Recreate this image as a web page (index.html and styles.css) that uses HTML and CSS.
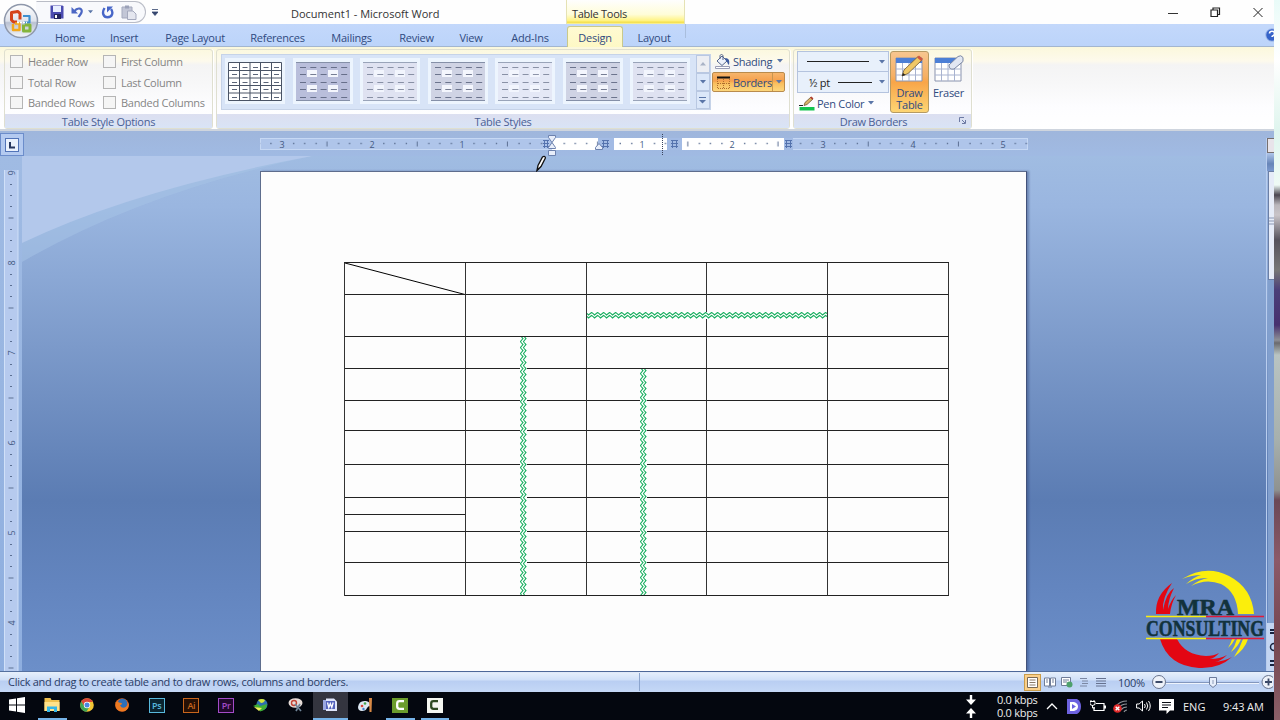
FILE: index.html
```
<!DOCTYPE html>
<html lang="en">
<head>
    <meta charset="UTF-8">
    <title>Document1 - Microsoft Word</title>
    <link rel="stylesheet" href="styles.css">
</head>
<body>
    <svg class="defs" width="0" height="0">
        <defs>
            <symbol id="thumb" viewBox="0 0 54 39">
                <rect width="54" height="39" fill="currentColor"/>
                <path d="M11 8h10v7H11zM32 8h10v7H32zM11 23h10v7H11zM32 23h10v7H32z" fill="#f4f6fd"/>
                <path d="M0 .5h54M0 38.5h54" stroke="#8590a8"/>
                <path d="M4 5.500h48M4 12.500h48M4 20.500h48M4 27.500h48M4 35.500h48" stroke="#4c5570" stroke-dasharray="6 4.300" opacity=".75"/>
            </symbol>
            <symbol id="down" viewBox="0 0 6 4"><path d="M0 0h6L3 3.500z" fill="#5b76a8"/></symbol>
            <pattern id="ticks" x="22" width="90.200" height="12" patternUnits="userSpaceOnUse">
                <path d="M11 5.500h1.300M22 5.500h1.300M33.500 5.500h1.300M56 5.500h1.300M67 5.500h1.300M78.500 5.500h1.300" stroke="#5b6f92" stroke-width="1.500"/>
                <path d="M45 3.500v5" stroke="#5b6f92"/>
            </pattern>
            <pattern id="vticks" y="3" width="14" height="90" patternUnits="userSpaceOnUse">
                <path d="M6 11.500h2M6 22.500h2M6 33.500h2M6 56.500h2M6 67.500h2M6 78.500h2M4.500 45h5" stroke="#5b6f92"/>
            </pattern>
            <pattern id="wave" width="6" height="7" patternUnits="userSpaceOnUse">
                <rect width="6" height="7" fill="#fff"/>
                <path d="M0 1.500L1.500 3 4.500 .5 6 1.500M0 4.500L1.500 6 4.500 3.500 6 4.500" fill="none" stroke="#14ad5c" stroke-width="1.100"/>
            </pattern>
            <pattern id="vwave" width="7" height="6" patternUnits="userSpaceOnUse">
                <rect width="7" height="6" fill="#fff"/>
                <path d="M1.500 0L3 1.500 .5 4.500 1.500 6M4.500 0L6 1.500 3.500 4.500 4.500 6" fill="none" stroke="#14ad5c" stroke-width="1.100"/>
            </pattern>
            <linearGradient id="orbFill" x2="0" y2="1">
                <stop offset="0" stop-color="#fff"/><stop offset=".5" stop-color="#dfe3ec"/><stop offset=".55" stop-color="#b9c1d2"/><stop offset="1" stop-color="#f4f7fc"/>
            </linearGradient>
        </defs>
    </svg>

    <div class="screen">
        <div class="window">
            <svg class="orb" width="36" height="36" viewBox="0 0 36 36">
                <circle cx="18" cy="18" r="16.500" fill="url(#orbFill)" stroke="#8f98ab" stroke-width="1.500"/>
                <g fill="none" stroke-width="3" stroke-linejoin="round">
                    <path d="M17 16.500V10.500l-2-2-6.500 1v7.500l2 2H14" stroke="#d5421a"/>
                    <path d="M20 13h6.500v6.500H21" stroke="#3d8fd0" stroke-width="2.200"/>
                    <path d="M10 21v6h6.500v-6.500H12" stroke="#f2a81d" stroke-width="2.400"/>
                    <path d="M20.500 21.500v6.500h6.500V22h-5" stroke="#84b53c"/>
                </g>
                <path d="M14 19.500h10" stroke="#fff" stroke-width="1.500" stroke-dasharray="2 1"/>
            </svg>

            <div class="titlebar">
                <div class="quick-access">
                    <svg width="14" height="14" viewBox="0 0 14 14"><path d="M.5.5h12l1 1v12H.5z" fill="#4a4bb0"/><path d="M3 1h8v6H3z" fill="#e9efff"/><path d="M4 9h7v5H4z" fill="#23265f"/><path d="M5 10h2v3H5z" fill="#fff"/></svg>
                    <svg class="undo" width="13" height="12" viewBox="0 0 13 12"><path d="M3 5.500C7 .5 12 2.500 10.500 6.500 9.800 8.500 8 10 7.500 11" fill="none" stroke="#4c67c4" stroke-width="2.200"/><path d="M.5 1v6.500H7z" fill="#4c67c4"/></svg>
                    <svg class="undo-arrow" width="5" height="4"><use href="#down"/></svg>
                    <svg class="redo" width="13" height="13" viewBox="0 0 13 13"><path d="M3.500 2C.5 7 2.500 11.300 6.500 11.300c5 0 6-5 3.500-8.300" fill="none" stroke="#4766c8" stroke-width="2.400"/><path d="M6 .5h6L6 6.500z" fill="#4766c8"/></svg>
                    <svg class="paste" width="16" height="15" viewBox="0 0 16 15"><path d="M1 2h10v11H1z" fill="#c2c6d6" stroke="#a4a9bd"/><path d="M4 .5h4v3H4z" fill="#9ba1b8"/><path d="M6.500 6H12l3 3v5.500H6.500z" fill="#e4e6ef" stroke="#a4a9bd"/></svg>
                </div>
                <svg class="customize" width="6" height="7" viewBox="0 0 6 7"><path d="M0 .5h6M0 3l3 3.500L6 3z" fill="#35466f" stroke="#35466f" stroke-width=".8"/></svg>
                <div class="title">Document1 - Microsoft Word</div>
                <div class="context-title">Table Tools</div>
                <div class="window-buttons">
                    <svg width="10" height="11" viewBox="0 0 10 11"><path d="M0 6.500h10" stroke="#333"/></svg>
                    <svg width="11" height="11" viewBox="0 0 11 11"><path d="M1 3h6.500v6.500H1zM3 3V1h6.500v6.500h-2" fill="none" stroke="#222" stroke-width="1.200"/></svg>
                    <svg width="10" height="11" viewBox="0 0 10 11"><path d="M.5 1l9 9M9.500 1l-9 9" stroke="#222"/></svg>
                </div>
            </div>

            <div class="tabs">
                <div class="tab home">Home</div>
                <div class="tab insert">Insert</div>
                <div class="tab page-layout">Page Layout</div>
                <div class="tab references">References</div>
                <div class="tab mailings">Mailings</div>
                <div class="tab review">Review</div>
                <div class="tab view">View</div>
                <div class="tab add-ins">Add-Ins</div>
                <div class="tab design active">Design</div>
                <div class="tab layout">Layout</div>
                <svg class="help" width="9" height="14" viewBox="0 0 9 14"><circle cx="7" cy="7" r="6.300" fill="#3563c9" stroke="#a9c0ec"/><path d="M4.500 5.500c0-3 5-3 5 0S7 7 7 9" fill="none" stroke="#fff" stroke-width="1.600"/></svg>
            </div>

            <div class="ribbon">
                <div class="group style-options">
                    <div class="group-body checks">
                        <label><i></i>Header Row</label><label><i></i>First Column</label>
                        <label><i></i>Total Row</label><label><i></i>Last Column</label>
                        <label><i></i>Banded Rows</label><label><i></i>Banded Columns</label>
                    </div>
                    <div class="group-name">Table Style Options</div>
                </div>

                <div class="group table-styles">
                    <div class="group-body">
                        <div class="gallery">
                            <div class="thumb"><svg width="54" height="39" viewBox="0 0 54 39"><path d="M.5.5h53v38H.5zM0 8.500h54M0 16h54M0 23.500h54M0 31h54M11.500 0v39M22 0v39M32.500 0v39M43.500 0v39" fill="#fff" stroke="#4a5466"/><path d="M4 5.500h48M4 12.500h48M4 20.500h48M4 27.500h48M4 35.500h48" stroke="#5a6478" stroke-dasharray="5 5.500"/></svg></div>
                            <div class="thumb t-dark"><svg width="54" height="39"><use href="#thumb"/></svg></div>
                            <div class="thumb t-light"><svg width="54" height="39"><use href="#thumb"/></svg></div>
                            <div class="thumb t-mid"><svg width="54" height="39"><use href="#thumb"/></svg></div>
                            <div class="thumb t-pale"><svg width="54" height="39"><use href="#thumb"/></svg></div>
                            <div class="thumb t-mid"><svg width="54" height="39"><use href="#thumb"/></svg></div>
                            <div class="thumb t-light"><svg width="54" height="39"><use href="#thumb"/></svg></div>
                            <div class="gallery-scroll">
                                <div class="disabled"><svg width="6" height="4" viewBox="0 0 6 4"><path d="M0 3.500h6L3 0z" fill="#a9b3c6"/></svg></div>
                                <div><svg width="6" height="4"><use href="#down"/></svg></div>
                                <div><svg width="7" height="7" viewBox="0 0 7 7"><path d="M0 .5h7" stroke="#5b76a8"/><path d="M0 3h7L3.500 6.500z" fill="#5b76a8"/></svg></div>
                            </div>
                        </div>
                        <div class="style-buttons">
                            <div class="shading">
                                <svg width="16" height="15" viewBox="0 0 16 15"><path d="M2 7l5-5 5 5-5 4.500z" fill="#eef2fb" stroke="#54658c"/><path d="M5 5V2c0-2 3-2 3 0v4" fill="none" stroke="#54658c"/><path d="M10 4c5 0 4.500 4 4 7-2-1-1-3-3-4z" fill="#3d5ba0"/><path d="M.5 12.500h14v2H.5z" fill="#fff" stroke="#9a9db5"/></svg>
                                <span>Shading</span><svg width="6" height="4"><use href="#down"/></svg>
                            </div>
                            <div class="borders">
                                <svg width="13" height="13" viewBox="0 0 13 13"><path d="M.5 3v9.500h12V3M6.500 3v9M1 7.500h11" fill="none" stroke="#b06d2d" stroke-dasharray="1 1"/><path d="M0 1.500h13" stroke="#111" stroke-width="2"/></svg>
                                <span>Borders</span><b><svg width="6" height="4"><use href="#down"/></svg></b>
                            </div>
                        </div>
                    </div>
                    <div class="group-name">Table Styles</div>
                </div>

                <div class="group draw-borders">
                    <div class="group-body">
                        <div class="pen">
                            <div class="combo"><hr class="long"><svg width="6" height="4"><use href="#down"/></svg></div>
                            <div class="combo"><span>½ pt</span><hr class="short"><svg width="6" height="4"><use href="#down"/></svg></div>
                            <div class="pen-color">
                                <svg width="16" height="15" viewBox="0 0 16 15"><path d="M.5 11h15v3.500H.5z" fill="#14c44e"/><path d="M0 9.500h4" stroke="#222"/><path d="M5 9.500l1-3 6-5.500 2 2-6 5.500z" fill="#d9b56a" stroke="#6f5632" stroke-width=".8"/><path d="M11 1.500L12.500.5l2 2-1.500 1z" fill="#b23c2e"/></svg>
                                <span>Pen Color</span><svg width="6" height="4"><use href="#down"/></svg>
                            </div>
                        </div>
                        <div class="big-button pressed">
                            <svg width="30" height="29" viewBox="0 0 30 29"><path d="M1 3h26v23H1z" fill="#fff" stroke="#8a93ad"/><path d="M1 3h26v5H1z" fill="#4c7fd6"/><path d="M1 14h26M1 20h26M7.500 8v18M14 8v18M20.500 8v18" stroke="#a8b3d0"/><path d="M7 21l2-6L23 1.500l4 3.500-14 13.500z" fill="#f0c867" stroke="#7c643c" stroke-width=".9"/><path d="M7 21l1-3 2.500 2z" fill="#222"/><path d="M22 2.500l2-2 4 3.500-2 2z" fill="#d0563f"/></svg>
                            Draw<br>Table
                        </div>
                        <div class="big-button">
                            <svg width="30" height="29" viewBox="0 0 30 29"><path d="M1 3h26v23H1z" fill="#fff" stroke="#8a93ad"/><path d="M1 3h26v5H1z" fill="#4c7fd6"/><path d="M1 14h26M1 20h26M7.500 8v18M14 8v18M20.500 8v18" stroke="#a8b3d0"/><path d="M15 10L24 1.500q3-2 5 1v4L20 14q-5 1-5-4z" fill="#e2e7f2" stroke="#7b87a3"/></svg>
                            Eraser
                        </div>
                    </div>
                    <div class="group-name">Draw Borders
                        <svg class="launcher" width="7" height="7" viewBox="0 0 7 7"><path d="M.5 5V.5H5M3 3l3 3M6.500 3v3.500H3" fill="none" stroke="#6d7aa3"/></svg>
                    </div>
                </div>
            </div>

            <div class="ruler-row">
                <div class="tab-stop"><svg width="14" height="14" viewBox="0 0 14 14"><rect x=".5" y=".5" width="13" height="13" fill="#eaf1fd" stroke="#5274b8"/><path d="M5 4v5.500h5" fill="none" stroke="#26375f" stroke-width="2"/></svg></div>
                <svg class="ruler" width="768" height="25" viewBox="0 0 768 25">
                    <rect x=".5" y="7.500" width="767" height="11" fill="#afc5ea" stroke="#c6d8f4"/>
                    <path d="M292 7h46v12h-46zM354 7h53v12h-53zM422 7h102v12H422z" fill="#fff"/>
                    <g transform="translate(0 7)"><rect width="768" height="12" fill="url(#ticks)"/></g>
                    <g class="ruler-num">
                        <text x="22" y="16.500">3</text><text x="112" y="16.500">2</text><text x="202" y="16.500">1</text>
                        <text x="382" y="16.500">1</text><text x="472" y="16.500">2</text><text x="563" y="16.500">3</text><text x="653" y="16.500">4</text><text x="743" y="16.500">5</text>
                    </g>
                    <path d="M338 7h16v12h-16zM407 7h15v12h-15zM524 7h9v12h-9z" fill="#a3bbe4"/>
                    <path d="M283 9.500h6M283 12.500h6M283 15.500h6M284.500 9v8M287.500 9v8M342 9.500h7M342 12.500h7M342 15.500h7M343.500 9v8M347.500 9v8M411 9.500h7M411 12.500h7M411 15.500h7M412.500 9v8M416.500 9v8M525 9.500h7M525 12.500h7M525 15.500h7M526.500 9v8M530.500 9v8" stroke="#5573ae"/>
                    <path d="M288.500 4.500h7v2l-3.500 5 3.500 5v1h-7v-1l3.500-5-3.500-5zM288.500 19.500h7v5h-7zM335.500 18.500v-2l3.500-4 3.500 4v2z" fill="#e8eefa" stroke="#6d82ae"/>
                    <path d="M402.500 3v22" stroke="#39435c" stroke-dasharray="1 1"/>
                </svg>
            </div>

            <div class="workspace">
                <svg class="v-ruler" width="22" height="515" viewBox="0 0 22 515">
                    <rect x="4" y="14" width="14" height="501" fill="#b6caee"/>
                    <path d="M4.500 14v501M18 14v501" stroke="#d0e0f8"/>
                    <g transform="translate(4 14)"><rect width="14" height="501" fill="url(#vticks)"/></g>
                    <g class="ruler-num">
                        <text transform="translate(15 17) rotate(-90)">9</text>
                        <text transform="translate(15 107) rotate(-90)">8</text>
                        <text transform="translate(15 197) rotate(-90)">7</text>
                        <text transform="translate(15 287) rotate(-90)">6</text>
                        <text transform="translate(15 377) rotate(-90)">5</text>
                        <text transform="translate(15 467) rotate(-90)">4</text>
                    </g>
                </svg>
                <div class="desk">
                    <svg class="swoosh" width="292" height="110" viewBox="0 0 292 110">
                        <path d="M0 0h290Q120 36 0 106z" fill="#a6c3e6" opacity=".55"/>
                        <path d="M0 0h290Q110 34 0 87z" fill="#b3c8eb"/>
                    </svg>
                    <div class="page">
                        <table>
                            <tr><td class="diagonal"><svg width="120" height="31" viewBox="0 0 120 31"><path d="M0 0l120 31.500" stroke="#000"/></svg></td><td></td><td></td><td></td><td></td></tr>
                            <tr><td></td><td></td><td></td><td></td><td></td></tr>
                            <tr><td></td><td></td><td></td><td></td><td></td></tr>
                            <tr><td></td><td></td><td></td><td></td><td></td></tr>
                            <tr><td></td><td></td><td></td><td></td><td></td></tr>
                            <tr><td></td><td></td><td></td><td></td><td></td></tr>
                            <tr><td></td><td></td><td></td><td></td><td></td></tr>
                            <tr><td class="split"><div></div></td><td></td><td></td><td></td><td></td></tr>
                            <tr><td></td><td></td><td></td><td></td><td></td></tr>
                            <tr><td></td><td></td><td></td><td></td><td></td></tr>
                        </table>
                        <svg class="wave-lines" width="605" height="334" viewBox="0 0 605 334">
                            <g transform="translate(243 50)"><rect width="240" height="7" fill="url(#wave)"/></g>
                            <g transform="translate(176 75)"><rect width="7" height="258" fill="url(#vwave)"/></g>
                            <g transform="translate(296 107)"><rect width="7" height="226" fill="url(#vwave)"/></g>
                        </svg>
                    </div>
                    <svg class="pencil" width="10" height="17" viewBox="0 0 10 17"><path d="M1 15.500l1-5L6.500 2q2-1.500 3 .8L5 11.500z" fill="#fff" stroke="#111" stroke-width="1.300"/><path d="M.5 16.500l1-4 2 1z" fill="#111"/></svg>
                    <svg class="logo" width="122" height="102" viewBox="0 0 122 102">
                        <path d="M37 11Q61-4 84 8q23 12 25 38H93Q92 24 76 16 61 10 46 18q9-7 17-8Q52 9 41 16q8-7 15-9-9 0-19 4z" fill="#fbee0c"/>
                        <path d="M11 46Q10 27 27 15 17 30 18 42 21 25 29 20q-6 12-6 21 3-9 8-14-5 9-6 19z" fill="#e30613"/>
                        <path d="M15 71h17q8 16 29 17 8 0 13-3-4 5-9 6 10 0 17-4-6 6-12 7 10-1 17-5-13 12-33 11Q23 98 15 71z" fill="#e30613"/>
                        <path d="M103 71q-3 10-14 18 6-9 9-18zM96 71q-3 8-10 13 4-6 6-13zM90 71q-3 6-7 9 3-5 4-9z" fill="#fbee0c"/>
                        <path d="M1 48.500h60M1 70.500h60" stroke="#fbee0c" stroke-width="1.400"/>
                        <path d="M61 48.500h58M61 70.500h58" stroke="#e01b3c" stroke-width="1.400"/>
                        <text class="mra" x="32" y="46.500" textLength="57" lengthAdjust="spacingAndGlyphs">MRA</text>
                        <text x="1" y="67.500" textLength="118" lengthAdjust="spacingAndGlyphs">CONSULTING</text>
                    </svg>
                </div>
                <div class="scrollbar">
                    <div class="ruler-toggle"></div>
                    <div class="scroll-up"></div>
                    <div class="scroll-thumb"></div>
                    <div class="scroll-track"></div>
                    <svg width="8" height="48" viewBox="0 0 8 48"><path d="M3 7h5M3 10h5M3 38h5M3 42h5" stroke="#17233f" stroke-width="2"/><circle cx="7" cy="24" r="3.500" fill="none" stroke="#17233f" stroke-width="1.500"/></svg>
                </div>
            </div>

            <div class="statusbar">
                <div class="message">Click and drag to create table and to draw rows, columns and borders.</div>
                <div class="view-buttons">
                    <div class="selected"><svg width="11" height="11" viewBox="0 0 11 11"><path d="M.5.5h10v10H.5z" fill="#fff" stroke="#7a6a55"/><path d="M2.500 3h6M2.500 5.500h6M2.500 8h6" stroke="#8a7a68"/></svg></div>
                    <div><svg width="12" height="11" viewBox="0 0 12 11"><path d="M.5 1h5v8h-5zM6.500 1h5v8h-5z" fill="#fff" stroke="#6f7c98"/><path d="M2 3h2M2 5h2M8 3h2M8 5h2M4 10h4" stroke="#6f7c98"/></svg></div>
                    <div><svg width="12" height="11" viewBox="0 0 12 11"><path d="M.5.5h9v8h-9z" fill="#fff" stroke="#6f7c98"/><path d="M2 3h6M2 5h4" stroke="#6f7c98"/><circle cx="8.500" cy="7.500" r="3" fill="#4da06c"/></svg></div>
                    <div><svg width="10" height="10" viewBox="0 0 10 10"><path d="M1 1.500h7M3 4h6M3 6.500h6M1 9h7" stroke="#7c88a3"/></svg></div>
                    <div><svg width="10" height="10" viewBox="0 0 10 10"><path d="M0 1.500h10M0 4h10M0 6.500h10M0 9h10" stroke="#66728f" stroke-width="1.200"/></svg></div>
                </div>
                <div class="zoom">100%</div>
                <svg class="slider" width="122" height="18" viewBox="0 0 122 18">
                    <path d="M15 9.500h93" stroke="#8397bd"/><path d="M15 10.500h93" stroke="#eef4fd"/>
                    <path d="M58.500 4.500h7v7L62 14.500l-3.500-3z" fill="#e8effb" stroke="#6d7c9c"/><path d="M62 7v4" stroke="#8d9cba"/>
                    <g fill="#eef2f9" stroke="#69748d"><circle cx="8" cy="9" r="6.500"/><circle cx="117.500" cy="9" r="6.500"/></g>
                    <path d="M4.500 9h7M114 9h7M117.500 5.500v7" stroke="#3c4a68" stroke-width="1.800"/>
                </svg>
            </div>

            <div class="taskbar">
                <div class="task"><svg width="16" height="16" viewBox="0 0 16 16"><path d="M0 2.500l7-1v6H0zM8 1.300L16 0v7.500H8zM0 8.500h7v6l-7-1zM8 8.500h8V16l-8-1.200z" fill="#fff"/></svg></div>
                <div class="task open"><svg width="16" height="14" viewBox="0 0 16 14"><path d="M.5 0h6l1 2h8v11H.5z" fill="#f0c14e"/><path d="M.5 4h15v9H.5z" fill="#ffe28a"/><path d="M3 14V8.500h10V14h-3v-3H6v3z" fill="#35b6e8"/></svg></div>
                <div class="task"><svg width="14" height="14" viewBox="0 0 14 14"><circle cx="7" cy="7" r="6.800" fill="#f4c534"/><path d="M1.200 3.500A6.800 6.800 0 0 1 13 4H7L4.500 9z" fill="#d9463a"/><path d="M1.200 3.500A6.800 6.800 0 0 0 6.500 13.800L9 9.500 4.500 8.500z" fill="#3fa456"/><circle cx="7" cy="7" r="3.200" fill="#fff"/><circle cx="7" cy="7" r="2.500" fill="#4a86e0"/></svg></div>
                <div class="task"><svg width="14" height="14" viewBox="0 0 14 14"><circle cx="7" cy="7" r="6.800" fill="#e8641c"/><circle cx="7.500" cy="5.500" r="4.800" fill="#2d6fb8"/><path d="M.5 4q2-1 3.500.5 3 0 3 1.500L5 7.500Q7 11 11 9q2.500-2 2.500-5Q15 10 10 13 2 14.500.5 8z" fill="#ed7a22"/></svg></div>
                <div class="task"><div class="adobe ps">Ps</div></div>
                <div class="task"><div class="adobe ai">Ai</div></div>
                <div class="task"><div class="adobe pr">Pr</div></div>
                <div class="task"><svg width="15" height="13" viewBox="0 0 15 13"><circle cx="9" cy="5.500" r="5.500" fill="#2f6fae"/><path d="M5 1q4-2 7 0-1 3-4 3z" fill="#d5e83b"/><path d="M0 7l5-2 2 2 7-2q0 6-7 7.500l-1-3z" fill="#3fae35"/><path d="M1 8l8 1-3 3z" fill="#eef25a"/></svg></div>
                <div class="task"><svg width="15" height="14" viewBox="0 0 15 14"><ellipse cx="7.500" cy="5" rx="7" ry="4.800" fill="#e7dcd8"/><circle cx="6" cy="5" r="2.500" fill="none" stroke="#c44435" stroke-width="1.400"/><path d="M7 6l6 7M12 6l-4 7" stroke="#71869a" stroke-width="1.700"/></svg></div>
                <div class="task current"><svg width="15" height="14" viewBox="0 0 15 14"><path d="M3 .5h8l3 3V13H3z" fill="#dfe6fa"/><path d="M0 2h3v10H0z" fill="#9ba8e0"/><path d="M3 3h9v8H3z" fill="#5463bd"/><path d="M4.500 4.500l1.300 5 1.500-4 1.500 4 1.400-5" fill="none" stroke="#fff" stroke-width="1.300"/></svg></div>
                <div class="task"><svg width="15" height="14" viewBox="0 0 15 14"><path d="M0 9q1-7 8-6 5 1 4 5-2 0-3 2-1 3-5 3-4 0-4-4z" fill="#dce7f2"/><circle cx="4" cy="8" r="1.300" fill="#d8443b"/><circle cx="7" cy="5.500" r="1.300" fill="#47a34b"/><circle cx="5.500" cy="11" r="1.200" fill="#3b7cd0"/><path d="M11 0h3l-.5 14h-2z" fill="#d98945"/></svg></div>
                <div class="task open"><div class="camtasia green"><svg width="9" height="10" viewBox="0 0 9 10"><path d="M8 1.200H3.500Q1.200 1.200 1.200 3.500v3Q1.200 8.800 3.500 8.800H8" fill="none" stroke="#fff" stroke-width="2.300"/></svg></div></div>
                <div class="task open"><div class="camtasia"><svg width="9" height="10" viewBox="0 0 9 10"><path d="M8 1.200H3.500Q1.200 1.200 1.200 3.500v3Q1.200 8.800 3.500 8.800H8" fill="none" stroke="#2e4a22" stroke-width="2.300"/></svg></div></div>

                <div class="tray">
                    <svg class="net-arrows" width="10" height="23" viewBox="0 0 10 23"><path d="M3.800 0h2.400v4.500H10L5 10 0 4.500h3.800zM5 13l5 5.500H6.200V23H3.800v-4.500H0z" fill="#fff"/></svg>
                    <div class="speed"><span>0.0 kbps</span><span>0.0 kbps</span></div>
                    <svg class="chevron" width="12" height="7" viewBox="0 0 12 7"><path d="M1 6l5-5 5 5" fill="none" stroke="#fff" stroke-width="1.300"/></svg>
                    <svg class="potplayer" width="14" height="15" viewBox="0 0 14 15"><path d="M0 0h10q4 2 4 7.500T10 15H0z" fill="#6d62e0"/><path d="M3 3h4q4 1 4 4.500T7 12H3z" fill="#fff"/><path d="M5 5v5l4-2.500z" fill="#6d62e0"/></svg>
                    <svg class="battery" width="16" height="12" viewBox="0 0 16 12"><path d="M6 3.500h8v7H4V7" fill="none" stroke="#fff" stroke-width="1.200"/><path d="M14 5.500h2v3h-2z" fill="#fff"/><path d="M0 1.500h5v3q-2.500 2-5 0zM2.500 5v3H5M1 0v2M4 0v2" fill="none" stroke="#fff"/></svg>
                    <svg class="wifi" width="15" height="13" viewBox="0 0 15 13"><path d="M3 6Q7 1 14 1M6 8q2-4 8-4M8 10q2-3 6-3M11 12q1-2 3-2" fill="none" stroke="#8d9096" stroke-width="1.200"/><circle cx="4.500" cy="8.500" r="4.300" fill="#e02828"/><path d="M2.700 6.700l3.600 3.600M6.300 6.700l-3.600 3.600" stroke="#fff" stroke-width="1.400"/></svg>
                    <svg class="speaker" width="15" height="12" viewBox="0 0 15 12"><path d="M.6 4h2.500L6.500 1v10L3.100 8H.6zM8.500 4q1.500 2 0 4M10.500 2.500q2.500 3.500 0 7M12.500 1q3.500 5 0 10" fill="none" stroke="#fff"/></svg>
                    <svg class="notify" width="15" height="15" viewBox="0 0 15 15"><path d="M0 0h15v11.500h-4L7.500 15v-3.500H0z" fill="#fff"/><path d="M3 3.500h9M3 6h9M3 8.500h6" stroke="#0a0d14"/></svg>
                    <div class="lang">ENG</div>
                    <div class="clock">9:43 AM</div>
                </div>
            </div>
        </div>
        <div class="wallpaper"></div>
    </div>
</body>
</html>
```
FILE: styles.css
```
* {
    box-sizing: border-box;
}

body {
    margin: 0;
    font-family: "Open Sans", "Noto Sans", sans-serif;
    font-size: 11px;
    letter-spacing: -0.28px;
    color: #304a80;
    overflow: hidden;
}

svg {
    display: block;
    flex: none;
}

.defs {
    position: absolute;
}

.screen {
    display: flex;
    width: 1280px;
    height: 720px;
}

.window {
    position: relative;
    display: flex;
    flex-direction: column;
    width: 1274px;
    height: 720px;
    overflow: hidden;
}

.wallpaper {
    width: 6px;
    background: linear-gradient(#e9fbf8 0, #fff 60px, #dff5ee 130px, #eefaf5 185px, #4a4650 195px, #b9b6bb 205px, #c9c4c8 215px, #55525c 240px, #777 270px, #4b3f78 290px, #47306f 325px, #8d8f96 340px, #6b6a6e 343px, #b9c4c2 355px, #a7b0ad 440px, #8f9290 490px, #6b4856 500px, #8c5a68 560px, #754650 640px, #8a5f68 720px);
}

/* title bar */

.titlebar {
    display: flex;
    align-items: center;
    height: 24px;
    background: #fefefe;
    color: #333;
}

.orb {
    position: absolute;
    left: 3px;
    top: 3px;
    z-index: 2;
}

.quick-access {
    display: flex;
    align-items: center;
    width: 110px;
    height: 22px;
    margin-left: 36px;
    padding-left: 13px;
    border: 1px solid #b9bcc6;
    border-left-color: transparent;
    border-radius: 0 11px 11px 0;
    background: #f8f9fc;
}

.undo {
    margin-left: 7px;
}

.undo-arrow {
    margin-left: 4px;
}

.redo {
    margin-left: 8px;
}

.paste {
    margin-left: 7px;
}

.customize {
    margin-left: 6px;
}

.title {
    width: 408px;
    padding-left: 133px;
    padding-top: 2px;
    letter-spacing: 0;
    white-space: nowrap;
}

.context-title {
    width: 119px;
    height: 24px;
    padding: 6px 0 0 5px;
    border-left: 1px solid #e5e2b4;
    border-right: 1px solid #e5e2b4;
    background: linear-gradient(#fefefe 0, #fffdd8 60%, #fff27c 88%, #f2dc40 92%, #faf3a8);
}

.window-buttons {
    display: flex;
    flex: 1;
    justify-content: flex-end;
    gap: 32px;
    padding-right: 11px;
}

/* tabs */

.tabs {
    display: flex;
    height: 23px;
    padding-left: 43px;
    background: linear-gradient(#c3d8fb, #bcd4fa);
    border-bottom: 1px solid #a3b6cf;
    line-height: 27px;
    letter-spacing: -0.25px;
    text-align: center;
}

.home { width: 54px; }
.insert { width: 54px; }
.page-layout { width: 88px; }
.references { width: 77px; }
.mailings { width: 71px; }
.review { width: 59px; }
.view { width: 50px; }
.add-ins { width: 68px; }
.design { width: 56px; }

.layout {
    width: 63px;
    margin-bottom: 8px;
    border-right: 1px solid #a9bedd;
}

.tab.active {
    height: 23px;
    margin: 2px 0 0 3px;
    line-height: 22px;
    background: linear-gradient(#fffad2, #fdf8c4);
    border: 1px solid #c9c98c;
    border-bottom: none;
    border-radius: 3px 3px 0 0;
}

.help {
    margin: 4px 0 0 auto;
}

/* ribbon */

.ribbon {
    display: flex;
    gap: 3px;
    height: 84px;
    padding: 2px 0 0 4px;
    background: linear-gradient(#fbf8dc 0, #fdfaec 14px, #f4f4f4 18px, #f7f7f8 36px, #fdfdff 60px, #fff);
    border-bottom: 2px solid #cfd5de;
}

.group {
    display: flex;
    flex-direction: column;
    border: 1px solid #dfdfd0;
    border-radius: 3px;
    box-shadow: 1px 0 0 #fff;
}

.style-options { width: 209px; }
.table-styles { width: 574px; }
.draw-borders { width: 179px; }

.group-body {
    display: flex;
    height: 64px;
}

.group-name {
    position: relative;
    height: 14px;
    background: linear-gradient(#dcdff0, #d9e4f6);
    color: #4a5f95;
    line-height: 15px;
    text-align: center;
}

.checks {
    display: grid;
    grid-template-columns: 93px 1fr;
    grid-template-rows: 21px 20px 21px;
    padding: 1px 0 0 5px;
    color: #858585;
}

.checks label {
    display: flex;
    align-items: center;
    gap: 5px;
    white-space: nowrap;
}

.checks i {
    width: 13px;
    height: 13px;
    border: 1px solid #b5b5b5;
    background: #f5f5f5;
}

.gallery {
    display: flex;
    flex: none;
    align-items: center;
    width: 490px;
    height: 56px;
    margin: 4px 0 0 4px;
    padding-left: 3px;
    gap: 7.5px;
    border: 1px solid #c6d3e8;
    background: #d8e4f7;
}

.thumb {
    display: flex;
    flex: none;
    align-items: center;
    justify-content: center;
    width: 60px;
    height: 46px;
    margin-bottom: 2px;
    background: #edf5fe;
}

.t-dark { color: #b9bedb; }
.t-light { color: #dcdeef; }
.t-mid { color: #cfd3e4; }
.t-pale { color: #e2e5f5; }

.t-light svg,
.t-pale svg {
    opacity: 0.8;
}

.gallery-scroll {
    flex: none;
    width: 14px;
    margin-left: -2px;
}

.gallery-scroll div {
    display: flex;
    align-items: center;
    justify-content: center;
    height: 18px;
    border: 1px solid #b9c8e2;
    background: #dbe7f9;
}

.gallery-scroll .disabled {
    background: #eceef3;
}

.style-buttons {
    display: flex;
    flex-direction: column;
    margin: 1px 0 0 1px;
}

.shading,
.borders {
    display: flex;
    align-items: center;
    width: 73px;
    height: 20px;
}

.shading {
    padding-left: 3px;
    gap: 2px;
}

.shading span {
    width: 42px;
}

.borders {
    margin-top: 1px;
    padding-left: 4px;
    border: 1px solid #b98b4c;
    border-radius: 2px;
    background: linear-gradient(#f6b56c, #f5a04c 45%, #f9bd5c 55%, #fcd67c);
}

.borders span {
    margin-left: 3px;
    width: 38px;
}

.borders b {
    display: flex;
    align-items: center;
    height: 18px;
    margin-left: 1px;
    padding-left: 3px;
    border-left: 1px solid #c79650;
}

.pen {
    width: 92px;
    margin: 1px 0 0 3px;
}

.combo {
    display: flex;
    align-items: center;
    height: 21px;
    padding: 0 3px 0 9px;
    border: 1px solid #b4c3de;
    background: #e8f0fb;
    color: #222;
}

.combo + .combo {
    border-top: none;
    padding-left: 11px;
}

.combo span {
    flex: none;
    width: 25px;
}

.combo hr {
    margin: 0 auto 0 0;
    border: none;
    height: 1px;
    background: #222;
}

.combo .long { width: 62px; }

.combo .short {
    width: 34px;
    margin-left: 4px;
}

.pen-color {
    display: flex;
    align-items: center;
    height: 20px;
    padding-left: 2px;
    gap: 2px;
    white-space: nowrap;
}

.pen-color span {
    width: 49px;
}

.big-button {
    width: 39px;
    height: 62px;
    margin-top: 1px;
    padding-top: 3px;
    line-height: 12px;
    text-align: center;
    border: 1px solid transparent;
    border-radius: 3px;
}

.big-button svg {
    margin: 0 auto 3px;
}

.pressed {
    margin-left: 1px;
    border-color: #b69a62;
    background: linear-gradient(#f7c68f 0, #f6b064 40%, #f8a548 50%, #fdd574);
}

.launcher {
    position: absolute;
    right: 5px;
    top: 3px;
}

.draw-borders .group-name {
    padding-right: 18px;
}

/* rulers */

.ruler-row {
    display: flex;
    height: 25px;
    background: linear-gradient(#9fb6dc, #a0bae3);
}

.tab-stop {
    display: flex;
    align-items: center;
    justify-content: center;
    width: 24px;
    height: 23px;
    margin-top: 2px;
    border: 1px solid #6c8dcb;
    background: #b4caf0;
}

.ruler {
    margin-left: 236px;
}

.ruler-num {
    font-family: "Open Sans", sans-serif;
    font-size: 9px;
    fill: #455a83;
    text-anchor: middle;
}

/* document */

.workspace {
    position: relative;
    display: flex;
    height: 515px;
    background: linear-gradient(#a0bce2 0, #9ab6e0 50px, #7c9aca 190px, #5b7cb3 345px, #6385bf 430px, #6c8fc9);
}

.v-ruler {
    background: linear-gradient(#a0bbe3, #8eaedf);
}

.desk {
    position: relative;
    flex: 1;
    padding: 15px 0 0 239px;
}

.swoosh {
    position: absolute;
    left: 0;
    top: 0;
}

.page {
    position: relative;
    width: 767px;
    height: 500px;
    margin-left: -1px;
    padding: 91px 0 0 84px;
    border: 1px solid #5e6d8d;
    border-bottom: none;
    border-right: 1px solid #43527a;
    background: #fdfdfd;
    box-shadow: 2px 0 2px rgba(40, 60, 110, 0.4);
}

table {
    width: 605px;
    margin: -1px 0 0 -1px;
    table-layout: fixed;
    border-collapse: separate;
    border-spacing: 0;
    border-left: 1px solid #333;
    border-top: 1px solid #222;
}

td {
    width: 121px;
    padding: 0;
    border-right: 1px solid #333;
    border-bottom: 1px solid #222;
}

td:nth-child(3) {
    width: 120px;
}

tr { height: 32px; }
tr:nth-child(2) { height: 42px; }
tr:nth-child(5) { height: 30px; }
tr:nth-child(6) { height: 34px; }
tr:nth-child(7) { height: 33px; }
tr:nth-child(8) { height: 34px; }
tr:nth-child(9) { height: 31px; }
tr:nth-child(10) { height: 33px; }

.split div {
    height: 1px;
    background: #222;
}

.wave-lines {
    position: absolute;
    left: 83px;
    top: 90px;
}

.pencil {
    position: absolute;
    left: 514px;
    top: -1px;
}

.logo {
    position: absolute;
    left: 1123px;
    top: 412px;
    overflow: visible;
}

.logo text {
    font-family: "Liberation Serif", serif;
    font-size: 24px;
    font-weight: bold;
    letter-spacing: 0;
    fill: #12323c;
    stroke: #12323c;
    stroke-width: 0.6px;
}

.logo .mra {
    font-size: 23px;
}

.scrollbar {
    display: flex;
    flex-direction: column;
    width: 8px;
    height: 533px;
    margin-top: -18px;
    border-left: 1px solid #b9cdee;
}

.ruler-toggle {
    height: 15px;
    border: 1px solid #77706f;
    border-right: none;
    background: #e8e4ea;
}

.scroll-up {
    height: 18px;
    background: linear-gradient(#b0c6ea, #6685b8 60%, #7b99cd);
}

.scroll-thumb {
    height: 109px;
    margin-left: 1px;
    border: 1px solid #6c7fa5;
    border-right: none;
    background: linear-gradient(#e6ecf8 45px, #8c98b3 46px, #e6ecf8 47px, #e6ecf8 48px, #8c98b3 49px, #e6ecf8 50px, #e6ecf8 51px, #8c98b3 52px, #e6ecf8 53px);
}

.scroll-track {
    flex: 1;
    margin-left: 1px;
    background: #819fcd;
}

.scrollbar svg {
    background: #c3d5f2;
}

/* status bar */

.statusbar {
    display: flex;
    align-items: center;
    height: 21px;
    border-top: 1px solid #54709f;
    background: linear-gradient(#e7f0fc 0, #d0e0f8 8px, #b9cef2 9px, #c5d8f6);
    color: #2b3d66;
}

.message {
    width: 640px;
    height: 18px;
    padding-left: 8px;
    line-height: 18px;
    border-right: 1px solid #8ba4cd;
    white-space: nowrap;
}

.view-buttons {
    display: flex;
    width: 86px;
    margin-left: 384px;
}

.view-buttons div {
    display: flex;
    align-items: center;
    justify-content: center;
    width: 17px;
    height: 17px;
}

.view-buttons .selected {
    border: 1px solid #c99c4a;
    background: #fbd08a;
}

.zoom {
    width: 33px;
    margin-left: 8px;
}

/* taskbar */

.taskbar {
    display: flex;
    height: 28px;
    background: #04070f;
    color: #eee;
}

.task {
    display: flex;
    align-items: center;
    justify-content: center;
    width: 34.8px;
    border-bottom: 2px solid transparent;
}

.task.open {
    border-image: linear-gradient(90deg, transparent 12%, #76b3e8 12%, #76b3e8 88%, transparent 88%) 1;
    border-image-width: 0 0 2px;
}

.task.current {
    background: #34353f;
    border-bottom-color: #76b3e8;
}

.adobe {
    width: 16px;
    height: 15px;
    border: 1px solid;
    font-size: 9px;
    font-weight: 600;
    line-height: 13px;
    text-align: center;
}

.ps { color: #58b8dc; background: #0b2430; }
.ai { color: #c8651c; background: #271005; }
.pr { color: #a44bc8; background: #20082c; }

.camtasia {
    display: flex;
    align-items: center;
    justify-content: center;
    width: 16px;
    height: 15px;
    background: #f5f7f2;
}

.camtasia.green {
    background: #6b9c2c;
}

.tray {
    display: flex;
    flex: 1;
    align-items: center;
    justify-content: flex-end;
    padding-right: 9px;
}

.speed {
    display: flex;
    flex-direction: column;
    width: 41px;
    margin-left: 21px;
    line-height: 13px;
    white-space: nowrap;
}

.chevron { margin-left: 8px; }
.potplayer { margin-left: 9px; }
.battery { margin-left: 9px; }
.wifi { margin-left: 7px; }
.speaker { margin-left: 8px; }
.notify { margin-left: 8px; }

.lang {
    width: 24px;
    margin-left: 9px;
    letter-spacing: 0;
}

.clock {
    width: 42px;
    margin-left: 16px;
    letter-spacing: -0.1px;
    white-space: nowrap;
}
```
